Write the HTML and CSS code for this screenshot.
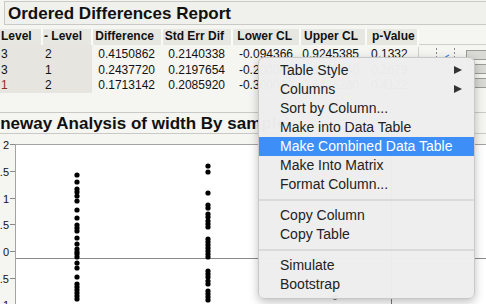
FILE: index.html
```html
<!DOCTYPE html>
<html lang="en">
<head>
    <meta charset="UTF-8">
    <meta name="viewport" content="width=device-width, initial-scale=1.0">
    <title>Ordered Differences Report</title>
    <link rel="stylesheet" href="styles.css">
</head>
<body>
    <div class="report">
        <div class="report-title">Ordered Differences Report</div>
        <table class="diffs">
            <colgroup>
                <col class="c-lvl"><col class="c-lvl2"><col class="c-num"><col class="c-num">
                <col class="c-lcl"><col class="c-ucl"><col class="c-p"><col class="c-chart">
            </colgroup>
            <thead>
                <tr>
                    <th class="lvl">Level</th>
                    <th class="lvl">- Level</th>
                    <th>Difference</th>
                    <th>Std Err Dif</th>
                    <th>Lower CL</th>
                    <th>Upper CL</th>
                    <th class="p">p-Value</th>
                    <th class="chart"></th>
                </tr>
            </thead>
            <tbody>
                <tr>
                    <td class="lvl">3</td><td class="lvl lvl2">2</td>
                    <td>0.4150862</td><td>0.2140338</td><td>-0.094366</td><td>0.9245385</td>
                    <td class="p">0.1332</td>
                    <td class="chart" rowspan="3">
                        <svg width="68" height="43" viewBox="0 0 68 43">
                            <line x1="0.5" y1="0" x2="0.5" y2="14" stroke="#cfcfcb"/>
                            <line x1="18.5" y1="1" x2="18.5" y2="14" stroke="#888" stroke-dasharray="2 2"/>
                            <line x1="36.5" y1="1" x2="36.5" y2="14" stroke="#888" stroke-dasharray="2 2"/>
                            <line x1="26" y1="11" x2="31" y2="8" stroke="#3b82e0" stroke-width="1.2"/>
                            <rect x="48.5" y="3.5" width="20" height="9" fill="#d9d9d5" stroke="#9a9a96"/>
                            <rect x="52.5" y="17.5" width="16" height="9" fill="#d9d9d5" stroke="#9a9a96"/>
                            <rect x="54.5" y="31.5" width="14" height="9" fill="#d9d9d5" stroke="#9a9a96"/>
                        </svg>
                    </td>
                </tr>
                <tr>
                    <td class="lvl">3</td><td class="lvl lvl2">1</td>
                    <td>0.2437720</td><td>0.2197654</td><td>-0.200000</td><td>0.6875440</td>
                    <td class="p">0.2679</td>
                </tr>
                <tr>
                    <td class="lvl low">1</td><td class="lvl lvl2">2</td>
                    <td>0.1713142</td><td>0.2085920</td><td>-0.300000</td><td>0.6426280</td>
                    <td class="p">0.4122</td>
                </tr>
            </tbody>
        </table>
    </div>

    <div class="oneway">
        <div class="oneway-title">Oneway Analysis of width By sample</div>
        <svg class="plot" width="486" height="171" viewBox="0 0 486 171">
            <rect x="15.5" y="10.5" width="480" height="170" fill="#fff" stroke="#a3a3a0"/>
            <g stroke="#888">
                <line x1="10" y1="10.5" x2="15" y2="10.5"/>
                <line x1="10" y1="37.5" x2="15" y2="37.5"/>
                <line x1="10" y1="64.5" x2="15" y2="64.5"/>
                <line x1="10" y1="90.5" x2="15" y2="90.5"/>
                <line x1="10" y1="117.5" x2="15" y2="117.5"/>
                <line x1="10" y1="144.5" x2="15" y2="144.5"/>
                <line x1="10" y1="170.5" x2="15" y2="170.5"/>
            </g>
            <g class="ticks" text-anchor="end">
                <text x="9" y="14.5">2</text>
                <text x="9" y="41.5">1.5</text>
                <text x="9" y="68.5">1</text>
                <text x="9" y="94.5">0.5</text>
                <text x="9" y="121.5">0</text>
                <text x="9" y="148.5">-0.5</text>
                <text x="9" y="174.5">-1</text>
            </g>
            <line x1="16" y1="124.5" x2="486" y2="124.5" stroke="#8a8a8a"/>
            <line x1="391.5" y1="11" x2="391.5" y2="171" stroke="#777"/>
            <g id="dots" fill="#000"></g>
        </svg>
    </div>

    <div class="menu">
        <div class="item sub">Table Style</div>
        <div class="item sub">Columns</div>
        <div class="item">Sort by Column...</div>
        <div class="item">Make into Data Table</div>
        <div class="item active">Make Combined Data Table</div>
        <div class="item">Make Into Matrix</div>
        <div class="item">Format Column...</div>
        <div class="sep"></div>
        <div class="item">Copy Column</div>
        <div class="item">Copy Table</div>
        <div class="sep"></div>
        <div class="item">Simulate</div>
        <div class="item">Bootstrap</div>
    </div>

    <script>
        // y positions of the points, in page coords (svg starts at y 133)
        const groups = [
            { x: 77, ys: [174, 181, 188, 191, 195, 200, 209, 217, 224, 227, 230, 237, 243, 248, 251, 253, 256, 262, 267, 276, 283, 286, 289, 292, 295, 298] },
            { x: 208, ys: [165, 171, 192, 204, 207, 213, 216, 220, 223, 226, 238, 241, 244, 247, 250, 253, 256, 270, 273, 276, 280, 283, 290, 293, 296, 299] },
            { x: 335, ys: [296] }
        ];
        const dots = document.getElementById('dots');
        groups.forEach(g => {
            g.ys.forEach(y => {
                const c = document.createElementNS('http://www.w3.org/2000/svg', 'circle');
                c.setAttribute('cx', g.x);
                c.setAttribute('cy', y - 133);
                c.setAttribute('r', 2.6);
                dots.appendChild(c);
            });
        });
    </script>
</body>
</html>
```

FILE: styles.css
```css
html, body {
    margin: 0;
    width: 486px;
    height: 304px;
    overflow: hidden;
}
body {
    position: relative;
    background-color: #f5f5f1;
    font-family: "Liberation Sans", Arial, sans-serif;
    color: #111;
}
.report {
    padding-top: 1px;
    height: 111px;
}
.report-title {
    margin-left: 4px;
    height: 22px;
    border: 1px solid #c9c9c5;
    border-right: none;
    background-color: #f0f0ec;
    padding-left: 3px;
    font-size: 17px;
    font-weight: bold;
    line-height: 23px;
}
.diffs {
    margin-top: 4px;
    table-layout: fixed;
    width: 486px;
    border-collapse: collapse;
    font-size: 12px;
}
.c-lvl { width: 42px; }
.c-lvl2 { width: 50px; }
.c-num { width: 70px; }
.c-lcl { width: 68px; }
.c-ucl { width: 66px; }
.c-p { width: 52px; }
.c-chart { width: 68px; }
.diffs th {
    height: 15px;
    padding: 0 7px 0 0;
    background-color: #e7e7e2;
    border-right: 2px solid #fbfbf9;
    text-align: right;
    font-weight: bold;
    line-height: 15px;
    white-space: nowrap;
}
.diffs td {
    height: 14px;
    padding: 0 7px 0 0;
    text-align: right;
    line-height: 14px;
    white-space: nowrap;
    overflow: hidden;
}
.diffs th.lvl, .diffs td.lvl {
    text-align: left;
    padding: 0 0 0 1px;
}
.diffs td.lvl {
    background-color: #e6e5df;
}
.diffs td.lvl2 {
    padding-left: 3px;
}
.diffs td.low {
    color: #8e2b22;
}
.diffs th.p, .diffs td.p {
    text-align: left;
    padding: 0 0 0 5px;
}
.diffs th.chart {
    background-color: transparent;
    border-right: none;
    border-bottom: 1px solid #cfcfcb;
}
.diffs td.chart {
    padding: 0;
    vertical-align: top;
}
.diffs tbody tr:first-child td {
    padding-top: 2px;
}
.oneway-title {
    height: 20px;
    border-top: 1px solid #c9c9c5;
    border-bottom: 1px solid #c9c9c5;
    margin-left: -13px;
    font-size: 17px;
    font-weight: bold;
    line-height: 21px;
    white-space: nowrap;
}
.plot {
    display: block;
}
.ticks {
    font-family: "Liberation Sans", Arial, sans-serif;
    font-size: 11px;
    fill: #111;
}
.menu {
    position: absolute;
    left: 258px;
    top: 57px;
    width: 217px;
    box-sizing: border-box;
    padding: 3px 0 4px;
    background-color: rgba(238, 238, 238, 0.98);
    border: 0.5px solid #c8c8c8;
    border-radius: 6px;
    box-shadow: 0 3px 10px rgba(0, 0, 0, 0.25);
    font-size: 14px;
    color: #222;
}
.item {
    position: relative;
    height: 19px;
    line-height: 19px;
    padding-left: 21px;
}
.item.active {
    background-color: #3d8ef7;
    color: #fff;
}
.item.sub::after {
    content: "";
    position: absolute;
    right: 12px;
    top: 5px;
    border-left: 8px solid #333;
    border-top: 4.5px solid transparent;
    border-bottom: 4.5px solid transparent;
}
.sep {
    height: 2px;
    margin: 5px 0;
    background-color: #dadada;
}
```
